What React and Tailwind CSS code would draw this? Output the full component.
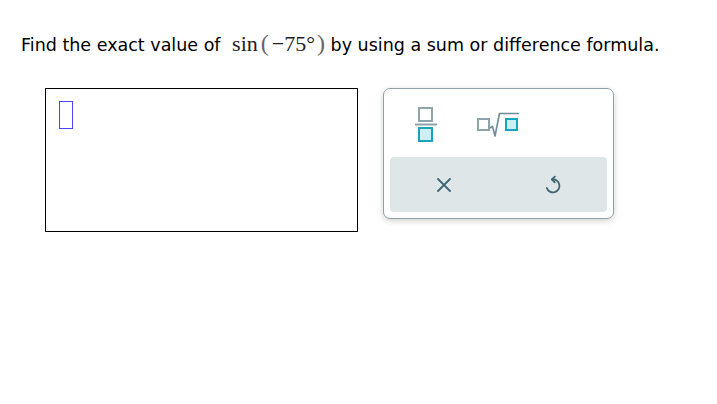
import React from 'react';

const GRAY = '#8fa3ab';
const TEAL = '#1aa3bd';
const FILL = '#cdeff4';

const FractionIcon = () => (
    <svg width="22" height="36" viewBox="0 0 22 36">
        <rect x="4" y="2" width="13" height="13" fill="white" stroke={GRAY} strokeWidth="2" />
        <line x1="0" y1="18.5" x2="22" y2="18.5" stroke={GRAY} strokeWidth="2" />
        <rect x="4" y="22" width="13" height="13" fill={FILL} stroke={TEAL} strokeWidth="2" />
    </svg>
);

const SqrtIcon = () => (
    <svg width="44" height="27" viewBox="0 0 44 27">
        <rect x="2" y="8" width="11" height="11" fill="white" stroke={GRAY} strokeWidth="2" />
        <path d="M14 17 L16.5 15.5 L19 25 L23.5 2.5 L43 2.5" fill="none" stroke="#6f8c96" strokeWidth="1.6" strokeLinejoin="round" />
        <rect x="30" y="8" width="11" height="11" fill={FILL} stroke={TEAL} strokeWidth="2" />
    </svg>
);

const ClearIcon = () => (
    <svg width="14" height="14" viewBox="0 0 14 14">
        <path d="M1 1 L13 13 M13 1 L1 13" stroke="#3f6572" strokeWidth="1.8" strokeLinecap="round" />
    </svg>
);

const UndoIcon = () => (
    <svg width="16" height="19" viewBox="0 0 16 19">
        <path d="M7 4.5 A6.5 6.5 0 1 1 1.8 13" fill="none" stroke="#3f6572" strokeWidth="1.8" strokeLinecap="round" />
        <path d="M9.8 1.6 L7 4.5 L9.8 7.4" fill="none" stroke="#3f6572" strokeWidth="1.8" strokeLinecap="round" strokeLinejoin="round" />
    </svg>
);

const App = () => {
    return (
        <div className="w-[717px] h-[404px] bg-white overflow-hidden">
            {/* Câu hỏi */}
            <p className="pt-[30px] pl-[21px] text-[17.5px] text-black leading-[26px]" style={{ fontFamily: '"DejaVu Sans", Verdana, sans-serif' }}>
                Find the exact value of{' '}
                <span className="inline-block ml-[6px] text-[22px] text-[#222]" style={{ fontFamily: '"Liberation Serif", serif' }}>
                    sin
                    <span className="text-[24px] text-[#666] ml-[3px] mr-[3px]">(</span>
                    −75
                    <span className="mr-[2px]">°</span>
                    <span className="text-[24px] text-[#666]">)</span>
                </span>{' '}
                by using a sum or difference formula.
            </p>

            <div className="flex items-start pl-[45px] pt-[30px]">
                {/* Ô trả lời */}
                <div className="w-[313px] h-[144px] border border-black pl-[13px] pt-[12px]">
                    <div className="w-[14px] h-[28px] border-[1.5px] border-[#4747ff]" />
                </div>

                {/* Bảng công cụ */}
                <div className="ml-[25px] w-[231px] h-[131px] rounded-[7px] border border-[#8fa0a8] bg-white shadow-[0_2px_6px_rgba(0,0,0,0.18)] px-[6px] pb-[6px] flex flex-col">
                    <div className="flex h-[68px] items-center pt-[1px]">
                        <div className="w-[70px] flex justify-center pl-[1px]">
                            <FractionIcon />
                        </div>
                        <div className="w-[70px] flex justify-center pl-[6px] pt-[2px]">
                            <SqrtIcon />
                        </div>
                    </div>
                    <div className="flex-1 rounded-[4px] bg-[#dfe6e8] grid grid-cols-2">
                        <div className="flex items-center justify-center">
                            <ClearIcon />
                        </div>
                        <div className="flex items-center justify-center">
                            <UndoIcon />
                        </div>
                    </div>
                </div>
            </div>
        </div>
    );
};

export default App;
